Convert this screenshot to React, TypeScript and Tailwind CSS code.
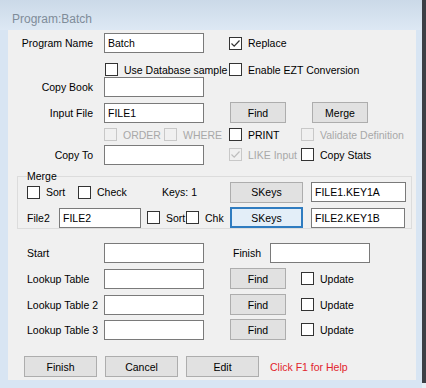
import React from 'react';

// Windows-forms style dialog: "Program:Batch"

function TextBox({ value = '', className = '' }: { value?: string; className?: string }) {
  return (
    <div
      className={`h-[20px] shrink-0 flex items-center border border-[#7a7a7a] bg-white pl-[3px] text-black whitespace-nowrap overflow-hidden ${className}`}
    >
      {value}
    </div>
  );
}

function Button({ label, className = '', focused = false }: { label: string; className?: string; focused?: boolean }) {
  return (
    <div
      className={`h-[21px] shrink-0 flex items-center justify-center text-black ${
        focused ? 'border-2 border-[#2f7cc0] bg-[#e3eef8]' : 'border border-[#adadad] bg-[#e1e1e1]'
      } ${className}`}
    >
      {label}
    </div>
  );
}

function CheckBox({
  label,
  checked = false,
  disabled = false,
  className = '',
}: {
  label: string;
  checked?: boolean;
  disabled?: boolean;
  className?: string;
}) {
  return (
    <div className={`flex items-center shrink-0 whitespace-nowrap ${className}`}>
      <span
        className={`w-[13px] h-[13px] shrink-0 flex items-center justify-center border ${
          disabled ? 'border-[#c8c8c8] bg-transparent' : 'border-[#333333] bg-white'
        }`}
      >
        {checked && (
          <svg width="11" height="11" viewBox="0 0 11 11">
            <path
              d="M1.5 5.5 L4.2 8.2 L9.5 2.5"
              fill="none"
              stroke={disabled ? '#bdbdbd' : '#333333'}
              strokeWidth="1.2"
            />
          </svg>
        )}
      </span>
      <span className={`ml-[6px] ${disabled ? 'text-[#a8a8a8]' : 'text-black'}`}>{label}</span>
    </div>
  );
}

export default function App() {
  return (
    <div className="w-[426px] h-[388px] flex bg-[#e8eef5] font-['Liberation_Sans',Arial,sans-serif]">
      <div className="w-[422px] h-[388px] flex flex-col bg-[#d8e5f3]">
        {/* title bar */}
        <div className="h-[30px] shrink-0 flex items-center pt-[7px] pl-[12px] text-[12px] text-[#7f8c99] bg-[linear-gradient(to_bottom,#cbd9e8,#dde8f4)]">
          Program:Batch
        </div>

        <div className="flex">
          <div className="w-[8px] shrink-0" />

          {/* client area */}
          <div className="w-[408px] h-[350px] shrink-0 flex flex-col bg-[#f0f0f0] text-[10.5px] leading-[12px] text-black">
            <div className="mt-[3px] h-[20px] flex items-center">
              <div className="w-[85px] shrink-0 text-right">Program Name</div>
              <TextBox className="ml-[11px] w-[100px]" value="Batch" />
              <CheckBox className="ml-[25px]" label="Replace" checked />
            </div>

            <div className="mt-[10px] h-[13px] flex items-center">
              <div className="w-[97px] shrink-0" />
              <CheckBox className="w-[124px]" label="Use Database sample" />
              <CheckBox label="Enable EZT Conversion" />
            </div>

            <div className="mt-[1px] h-[20px] flex items-center">
              <div className="w-[85px] shrink-0 text-right">Copy Book</div>
              <TextBox className="ml-[11px] w-[100px]" />
            </div>

            <div className="mt-[5px] h-[21px] flex items-center">
              <div className="w-[85px] shrink-0 text-right">Input File</div>
              <TextBox className="ml-[11px] w-[100px]" value="FILE1" />
              <Button className="ml-[26px] w-[56px]" label="Find" />
              <Button className="ml-[26px] w-[56px]" label="Merge" />
            </div>

            <div className="mt-[5px] h-[13px] flex items-center">
              <div className="w-[96px] shrink-0" />
              <CheckBox className="w-[60px]" label="ORDER" disabled />
              <CheckBox className="w-[65px]" label="WHERE" disabled />
              <CheckBox className="w-[72px]" label="PRINT" />
              <CheckBox label="Validate Definition" disabled />
            </div>

            <div className="mt-[3px] h-[21px] flex items-center">
              <div className="w-[85px] shrink-0 text-right">Copy To</div>
              <TextBox className="ml-[11px] w-[100px]" />
              <CheckBox className="ml-[25px] w-[72px]" label="LIKE Input" checked disabled />
              <CheckBox label="Copy Stats" />
            </div>

            {/* Merge group */}
            <fieldset className="mt-[5px] ml-[9px] w-[395px] border border-[#dcdcdc]">
              <legend className="ml-[9px] px-0 leading-[12px]">Merge</legend>
              <div className="h-[20px] flex items-center pl-[9px]">
                <CheckBox className="w-[51px]" label="Sort" />
                <CheckBox className="w-[84px]" label="Check" />
                <div className="w-[68px] shrink-0">Keys: 1</div>
                <Button className="w-[73px] h-[20px]" label="SKeys" />
                <TextBox className="ml-[8px] w-[95px]" value="FILE1.KEY1A" />
              </div>
              <div className="mt-[5px] h-[21px] flex items-center pl-[9px]">
                <div className="w-[32px] shrink-0">File2</div>
                <TextBox className="w-[82px]" value="FILE2" />
                <CheckBox className="ml-[6px] w-[39px]" label="Sort" />
                <CheckBox className="w-[44px]" label="Chk" />
                <Button className="w-[73px]" label="SKeys" focused />
                <TextBox className="ml-[8px] w-[94px]" value="FILE2.KEY1B" />
              </div>
            </fieldset>

            <div className="mt-[14px] h-[20px] flex items-center">
              <div className="ml-[19px] w-[77px] shrink-0">Start</div>
              <TextBox className="w-[100px]" />
              <div className="ml-[29px] w-[37px] shrink-0">Finish</div>
              <TextBox className="w-[100px]" />
            </div>

            <div className="mt-[5px] h-[21px] flex items-center">
              <div className="ml-[19px] w-[77px] shrink-0">Lookup Table</div>
              <TextBox className="w-[100px]" />
              <Button className="ml-[26px] w-[56px]" label="Find" />
              <CheckBox className="ml-[15px]" label="Update" />
            </div>

            <div className="mt-[5px] h-[21px] flex items-center">
              <div className="ml-[19px] w-[77px] shrink-0 whitespace-nowrap">Lookup Table 2</div>
              <TextBox className="w-[100px]" />
              <Button className="ml-[26px] w-[56px]" label="Find" />
              <CheckBox className="ml-[15px]" label="Update" />
            </div>

            <div className="mt-[4px] h-[21px] flex items-center">
              <div className="ml-[19px] w-[77px] shrink-0 whitespace-nowrap">Lookup Table 3</div>
              <TextBox className="w-[100px]" />
              <Button className="ml-[26px] w-[56px]" label="Find" />
              <CheckBox className="ml-[15px]" label="Update" />
            </div>

            <div className="mt-[16px] h-[21px] flex items-center">
              <Button className="ml-[16px] w-[73px]" label="Finish" />
              <Button className="ml-[8px] w-[73px]" label="Cancel" />
              <Button className="ml-[8px] w-[73px]" label="Edit" />
              <div className="ml-[11px] text-[#e2232c] whitespace-nowrap">Click F1 for Help</div>
            </div>
          </div>
        </div>
      </div>

      <div className="w-[4px] flex flex-col">
        <div className="h-[383px] bg-[#3c3f45]" />
        <div className="flex-1 bg-[#e8eef5]" />
      </div>
    </div>
  );
}
